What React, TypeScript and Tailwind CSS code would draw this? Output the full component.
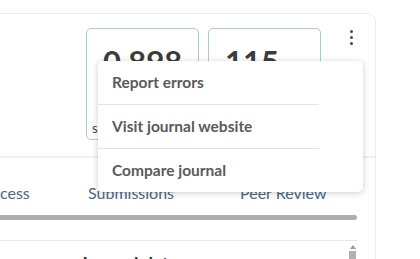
import { useState } from 'react';

const MENU_ITEMS = ['Report errors', 'Visit journal website', 'Compare journal'];

const TABS = [
  { label: 'cess', x: 'w-[88px]' },
  { label: 'Submissions', x: 'w-[152px]' },
  { label: 'Peer Review', x: 'w-[100px]' },
];

function Metric({ value, label }: { value: string; label: string }) {
  return (
    <div className="w-[113px] h-[112px] rounded-[5px] border border-[#a6d1b4] bg-white flex flex-col justify-between">
      <div className="px-4 pt-[10px] text-[31px] font-bold leading-[44px] text-[#3c3c3c]">{value}</div>
      <div className="pl-[5px] pb-[2px] text-[13px] leading-[18px] text-[#444]">{label}</div>
    </div>
  );
}

export default function App() {
  const [open] = useState(true);

  return (
    <div className="w-[420px] h-[259px] overflow-hidden bg-white pt-[13px]" style={{ fontFamily: 'Lato, "Open Sans", sans-serif' }}>
      <div className="relative w-[376px]">
        {/* header */}
        <div className="h-[144px] rounded-tr-[9px] border-t border-r border-b border-[#ececec] shadow-[0_1px_2px_rgba(0,0,0,0.06)] flex pt-[14px] pl-[86px]">
          <div className="flex gap-[9px]">
            <Metric value="0.898" label="score" />
            <Metric value="115" label="days" />
          </div>
          <button className="ml-[29px] flex flex-col gap-[3px] h-[18px] pt-[2px]">
            <span className="w-[3px] h-[3px] rounded-full bg-[#3b4b5e]" />
            <span className="w-[3px] h-[3px] rounded-full bg-[#3b4b5e]" />
            <span className="w-[3px] h-[3px] rounded-full bg-[#3b4b5e]" />
          </button>
        </div>

        {/* tabs */}
        <div className="border-r border-[#ececec] pr-[18px]">
          <div className="flex h-[58px] items-end pb-[12px] text-[16px] leading-[20px] text-[#4a6886]">
            {TABS.map((t) => (
              <div key={t.label} className={t.x}>{t.label}</div>
            ))}
          </div>
          <div className="h-[5px] rounded-r-full bg-[#adadad]" />
          <div className="h-[20px]" />
          <div className="flex border-t border-[#e6e6e6] h-[60px]">
            <div className="flex-1 pl-[80px] pt-[10px] text-[18px] font-bold text-[#333]">Journal data</div>
            <div className="w-[9px] flex flex-col items-center pt-[4px] gap-[2px]">
              <span className="w-0 h-0 border-l-[3px] border-r-[3px] border-b-[4px] border-l-transparent border-r-transparent border-b-[#9a9a9a]" />
              <span className="w-[7px] h-[30px] bg-[#b0b0b0]" />
            </div>
          </div>
        </div>

        {open && (
          <div className="absolute left-[98px] top-[48px] w-[265px] rounded-[5px] bg-white shadow-[0_1px_6px_rgba(0,0,0,0.2)]">
            {MENU_ITEMS.map((item, i) => (
              <div key={item}>
                {i > 0 && <div className="w-[221px] h-px bg-[#e3e3e3]" />}
                <div className="h-[43px] flex items-center px-[14px] text-[15.5px] font-bold text-[#5a5a5a]">{item}</div>
              </div>
            ))}
          </div>
        )}
      </div>
    </div>
  );
}
